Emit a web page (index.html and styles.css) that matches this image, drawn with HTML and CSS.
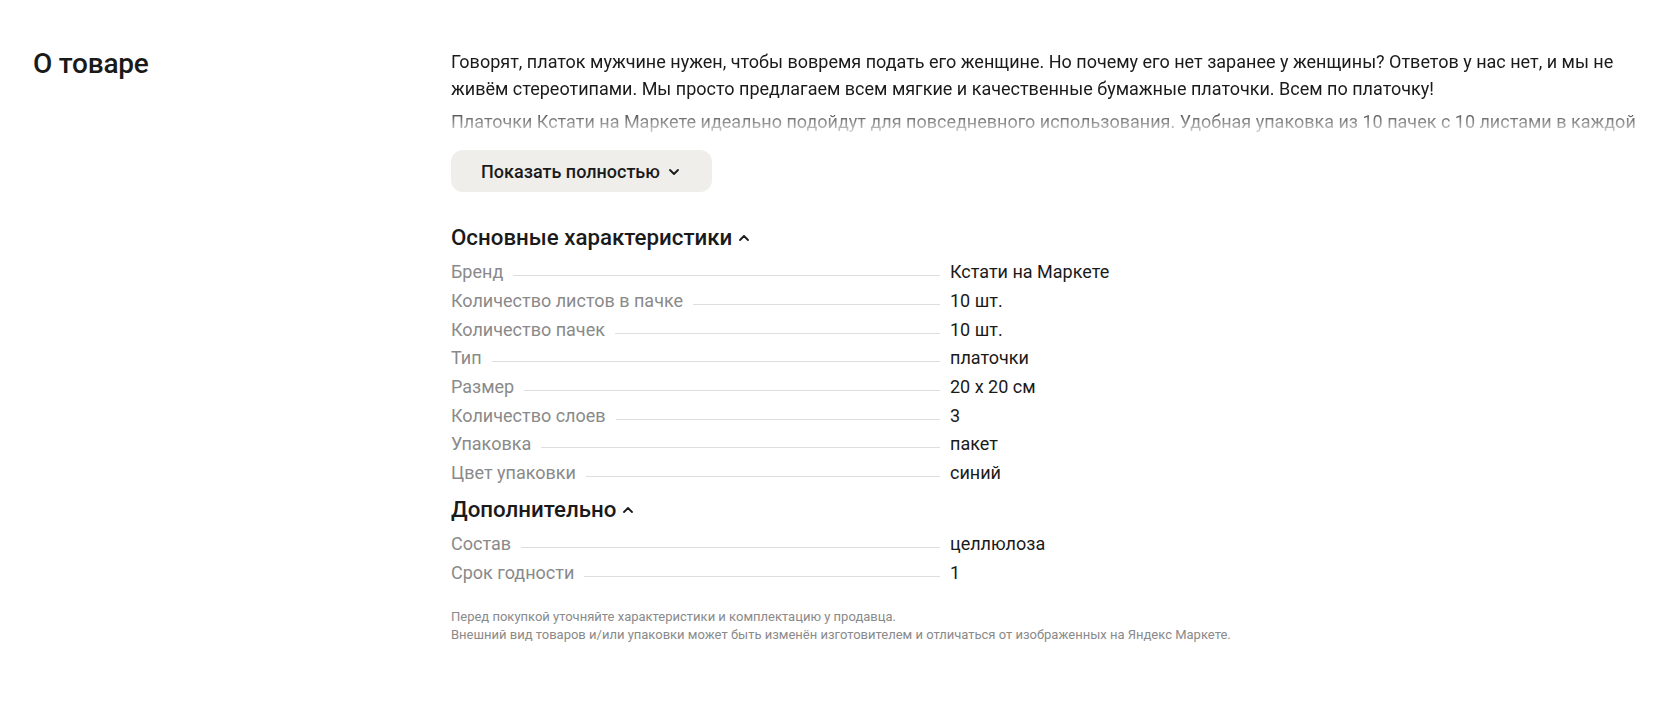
FILE: index.html
```html
<!DOCTYPE html>
<html lang="ru">
<head>
<meta charset="utf-8">
<title>О товаре</title>
<link rel="stylesheet" href="styles.css">
</head>
<body>
<section class="about">
  <h2 class="about-title">О товаре</h2>
  <div class="about-main">
    <div class="desc">
      <p>Говорят, платок мужчине нужен, чтобы вовремя подать его женщине. Но почему его нет заранее у женщины? Ответов у нас нет, и мы не живём стереотипами. Мы просто предлагаем всем мягкие и качественные бумажные платочки. Всем по платочку!</p>
      <p>Платочки Кстати на Маркете идеально подойдут для повседневного использования. Удобная упаковка из 10 пачек с 10 листами в каждой позволит всегда иметь под рукой платочки дома, на работе или в дороге.</p>
    </div>
    <button class="more-btn" type="button">Показать полностью
      <svg class="chev" width="12" height="8" viewBox="0 0 12 8"><path d="M2 2l4 4 4-4" fill="none" stroke="#1a1a1a" stroke-width="1.8" stroke-linecap="round" stroke-linejoin="round"/></svg>
    </button>

    <h3 class="spec-title">Основные характеристики
      <svg class="chev-up" width="12" height="8" viewBox="0 0 12 8"><path d="M2 6l4-4 4 4" fill="none" stroke="#1a1a1a" stroke-width="1.8" stroke-linecap="round" stroke-linejoin="round"/></svg>
    </h3>
    <dl class="specs">
      <div class="row"><dt><span>Бренд</span><i></i></dt><dd>Кстати на Маркете</dd></div>
      <div class="row"><dt><span>Количество листов в пачке</span><i></i></dt><dd>10 шт.</dd></div>
      <div class="row"><dt><span>Количество пачек</span><i></i></dt><dd>10 шт.</dd></div>
      <div class="row"><dt><span>Тип</span><i></i></dt><dd>платочки</dd></div>
      <div class="row"><dt><span>Размер</span><i></i></dt><dd>20 х 20 см</dd></div>
      <div class="row"><dt><span>Количество слоев</span><i></i></dt><dd>3</dd></div>
      <div class="row"><dt><span>Упаковка</span><i></i></dt><dd>пакет</dd></div>
      <div class="row"><dt><span>Цвет упаковки</span><i></i></dt><dd>синий</dd></div>
    </dl>

    <h3 class="spec-title spec-title-2">Дополнительно
      <svg class="chev-up" width="12" height="8" viewBox="0 0 12 8"><path d="M2 6l4-4 4 4" fill="none" stroke="#1a1a1a" stroke-width="1.8" stroke-linecap="round" stroke-linejoin="round"/></svg>
    </h3>
    <dl class="specs">
      <div class="row"><dt><span>Состав</span><i></i></dt><dd>целлюлоза</dd></div>
      <div class="row"><dt><span>Срок годности</span><i></i></dt><dd>1</dd></div>
    </dl>

    <p class="note">Перед покупкой уточняйте характеристики и комплектацию у продавца.<br>Внешний вид товаров и/или упаковки может быть изменён изготовителем и отличаться от изображенных на Яндекс Маркете.</p>
  </div>
</section>
</body>
</html>
```

FILE: styles.css
```css
* { box-sizing: border-box; }
html, body { margin: 0; padding: 0; background: #fff; }
body {
  font-family: Roboto, "Noto Sans", Arial, sans-serif;
  color: #1a1a1a;
}
.about {
  display: grid;
  grid-template-columns: 418px 1fr;
  padding: 48px 33px 0 33px;
}
.about-title {
  margin: 0;
  font-size: 28px;
  line-height: 32px;
  font-weight: 500;
  letter-spacing: -0.2px;
}
.about-main {
  display: flex;
  flex-direction: column;
  align-items: flex-start;
  min-width: 0;
}
.desc {
  height: 87px;
  overflow: hidden;
  font-size: 18px;
  line-height: 27px;
  -webkit-mask-image: linear-gradient(to bottom, #000 0, #000 58px, rgba(0,0,0,0.1) 87px);
  mask-image: linear-gradient(to bottom, #000 0, #000 58px, rgba(0,0,0,0.1) 87px);
}
.desc p { margin: 0 0 6px 0; }
.more-btn {
  margin-top: 15px;
  height: 42px;
  width: 261px;
  border: none;
  border-radius: 12px;
  background: #efeeea;
  font-family: inherit;
  font-size: 18px;
  font-weight: 500;
  color: #1a1a1a;
  display: flex;
  align-items: center;
  justify-content: center;
  gap: 8px;
  padding: 0 2px 0 0;
}
.chev { margin-top: 1px; }
.spec-title {
  margin: 31px 0 7px 0;
  font-size: 22.3px;
  line-height: 28px;
  font-weight: 500;
  display: flex;
  align-items: center;
  gap: 6px;
}
.spec-title-2 { margin-top: 7px; margin-bottom: 7px; }
.chev-up { margin-top: 2px; }
.specs {
  margin: 0;
  width: 100%;
}
.row {
  display: grid;
  grid-template-columns: 499px 1fr;
  height: 28.7px;
  align-items: center;
  font-size: 18px;
  line-height: 22px;
}
.row dt {
  display: flex;
  align-items: baseline;
  color: #8a8a8a;
  padding-right: 10px;
}
.row dt span { white-space: nowrap; }
.row dt i {
  flex: 1;
  margin-left: 10px;
  border-bottom: 1px solid #dedede;
  height: 1px;
  position: relative;
  top: -2px;
}
.row dd { margin: 0; color: #1a1a1a; }
.note {
  margin: 21px 0 0 0;
  font-size: 13px;
  line-height: 18px;
  color: #8a8a8a;
}
```
